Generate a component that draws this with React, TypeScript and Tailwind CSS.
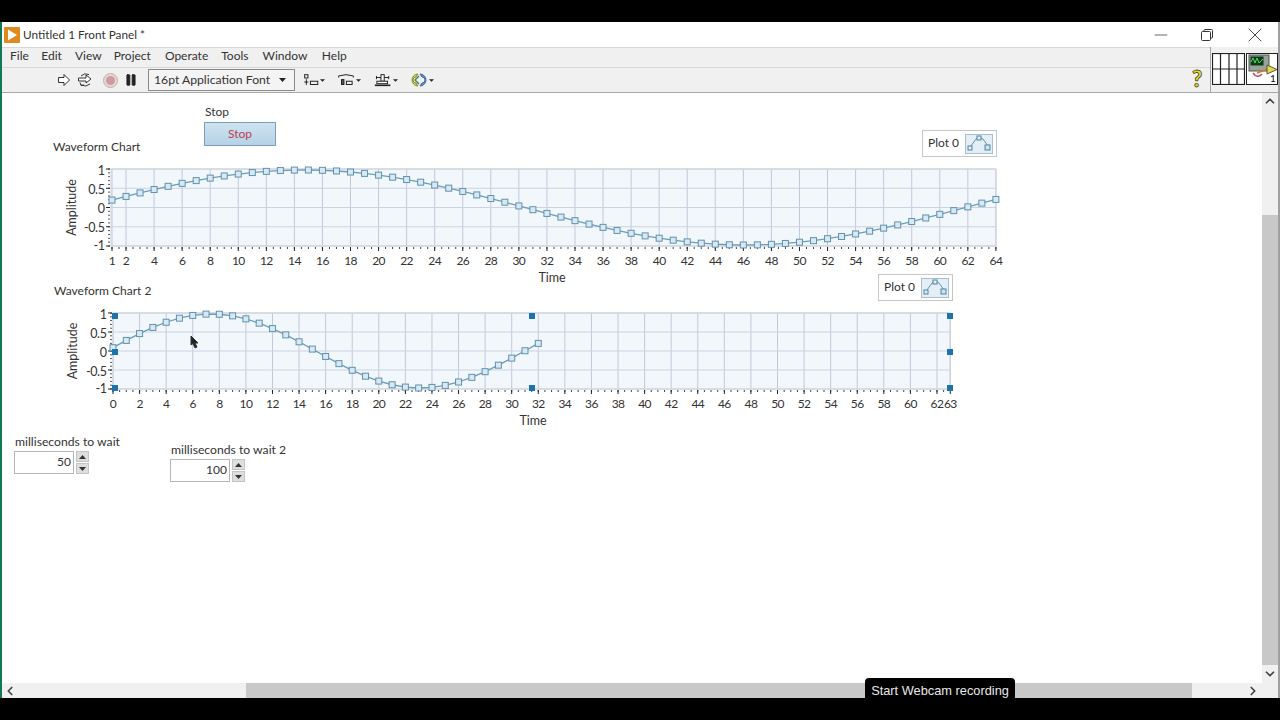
import { Minus, X, ChevronUp, ChevronDown, ChevronLeft, ChevronRight, Pause } from 'lucide-react';

const FONT = 'Lato, "Noto Sans", sans-serif';

type ChartProps = {
  className: string;
  viewBox: string;
  width: number;
  height: number;
  left: number;
  right: number;
  top: number;
  bottom: number;
  x0: number;
  pxPerUnit: number;
  labels: number[];
  points: number;
  freq: number;
  phase: number;
  firstIndex: number;
  timeX: number;
  timeY: number;
  ampX: number;
};

const Chart = (p: ChartProps) => {
  const toX = (v: number) => p.x0 + (v - p.firstIndex) * p.pxPerUnit;
  const mid = (p.top + p.bottom) / 2;
  const amp = (p.bottom - p.top) / 2 - 1;
  const data = Array.from({ length: p.points }, (_, i) => {
    const v = i + p.firstIndex;
    return { x: toX(v), y: mid - Math.sin(p.freq * (v + p.phase)) * amp };
  });
  const end = (p.right - p.x0) / p.pxPerUnit;
  const minor = Array.from({ length: Math.floor(end * 2) + 1 }, (_, i) => p.x0 + (i * p.pxPerUnit) / 2);
  const yTicks = Array.from({ length: 21 }, (_, i) => p.top + ((p.bottom - p.top) * i) / 20);
  const yLabels = ['1', '0.5', '0', '-0.5', '-1'];

  return (
    <svg className={p.className} width={p.width} height={p.height} viewBox={p.viewBox} style={{ fontFamily: FONT }}>
      <rect x={p.left} y={p.top} width={p.right - p.left} height={p.bottom - p.top} fill="#f2f7fb" />
      {p.labels.map((l) => (
        <line key={l} x1={toX(l)} x2={toX(l)} y1={p.top} y2={p.bottom} stroke="#c2c8dc" />
      ))}
      {[0, 1, 2, 3, 4].map((i) => {
        const y = p.top + ((p.bottom - p.top) * i) / 4;
        return <line key={i} x1={p.left} x2={p.right} y1={y} y2={y} stroke="#cdd2e2" />;
      })}
      <rect x={p.left} y={p.top} width={p.right - p.left} height={p.bottom - p.top} fill="none" stroke="#cfd2d8" />
      {minor.map((x, i) => (
        <line key={i} x1={x} x2={x} y1={p.bottom + 1} y2={p.bottom + 3} stroke="#444" strokeWidth="1" />
      ))}
      {p.labels.map((l) => (
        <line key={l} x1={toX(l)} x2={toX(l)} y1={p.bottom + 1} y2={p.bottom + 5} stroke="#222" strokeWidth="1" />
      ))}
      {yTicks.map((y, i) => (
        <line key={i} x1={p.left - 3} x2={p.left - 1} y1={y} y2={y} stroke="#555" />
      ))}
      {yLabels.map((l, i) => (
        <g key={l}>
          <line x1={p.left - 5} x2={p.left - 1} y1={p.top + ((p.bottom - p.top) * i) / 4} y2={p.top + ((p.bottom - p.top) * i) / 4} stroke="#222" />
          <text x={p.left - 6.5} y={p.top + ((p.bottom - p.top) * i) / 4 + 5.5 + (i === 0 ? 0.5 : i === 4 ? -1.5 : 0)} textAnchor="end" fontSize="12.5" letterSpacing="-0.4" fill="#333">
            {l}
          </text>
        </g>
      ))}
      {p.labels.map((l) => (
        <text key={l} x={toX(l)} y={p.bottom + 19} textAnchor="middle" fontSize="12" letterSpacing="-0.6" fill="#333">
          {l}
        </text>
      ))}
      <polyline points={data.map((d) => d.x + ',' + d.y).join(' ')} fill="none" stroke="#6b9db8" strokeWidth="1.3" />
      {data.map((d, i) => (
        <rect key={i} x={d.x - 3} y={d.y - 3} width="6" height="6" fill="#d9e8f2" stroke="#5f93ae" />
      ))}
      <text x={p.timeX} y={p.timeY} textAnchor="middle" fontSize="12.5" fill="#333">
        Time
      </text>
      <text transform={'translate(' + p.ampX + ',' + mid + ') rotate(-90)'} textAnchor="middle" fontSize="12.5" fill="#333">
        Amplitude
      </text>
    </svg>
  );
};

const PlotLegend = ({ className }: { className: string }) => (
  <div className={'absolute flex h-[27px] w-[75px] items-center justify-between border border-[#c6c6c6] bg-white pl-[5px] pr-[3px] ' + className}>
    <span className="pb-[2px] text-[12px] text-[#333]">Plot 0</span>
    <svg width="28" height="20" viewBox="0 0 28 20">
      <rect x="0.5" y="0.5" width="27" height="19" fill="#e4eef6" stroke="#a9bfd0" />
      <path d="M4 15 L6 12 L11 5 L14 3 L18 5 L23 12 L25 14" fill="none" stroke="#5f93ae" />
      <rect x="3" y="12" width="4" height="4" fill="#e4eef6" stroke="#4f84a0" />
      <rect x="12" y="2" width="4" height="4" fill="#e4eef6" stroke="#4f84a0" />
      <rect x="20" y="11" width="5" height="5" fill="#cfe3ef" stroke="#4f84a0" />
    </svg>
  </div>
);

const Numeric = ({ label, value, className }: { label: string; value: string; className: string }) => (
  <div className={'absolute flex w-[130px] flex-col ' + className}>
    <span className="h-[18px] pl-[1px] text-[12.2px] leading-[17px] text-[#333]">{label}</span>
    <div className="flex gap-[2px]">
      <div className="flex h-[23px] w-[60px] items-center justify-end border border-[#b5b5b5] bg-white pb-[2px] pr-[2px] text-[12px] text-[#333]">
        {value}
      </div>
      <div className="flex flex-col gap-[1px]">
        <div className="flex h-[11px] w-[13px] items-center justify-center border border-[#c4c4c4] bg-[#dedede]">
          <svg width="7" height="4" viewBox="0 0 7 4"><path d="M3.5 0 L7 4 H0 Z" fill="#333" /></svg>
        </div>
        <div className="flex h-[11px] w-[13px] items-center justify-center border border-[#c4c4c4] bg-[#dedede]">
          <svg width="7" height="4" viewBox="0 0 7 4"><path d="M0 0 H7 L3.5 4 Z" fill="#333" /></svg>
        </div>
      </div>
    </div>
  </div>
);

const Handle = ({ className }: { className: string }) => (
  <div className={'absolute h-[6px] w-[6px] bg-[#1a74ae] ' + className} />
);

const AlignIcon = ({ children, className }: { children: React.ReactNode; className: string }) => (
  <div className={'flex items-center gap-[1px] ' + className}>
    <svg width="18" height="14" viewBox="0 0 22 16" fill="none" stroke="#222" strokeWidth="1.2">
      {children}
    </svg>
    <svg width="5" height="3" viewBox="0 0 6 3"><path d="M0 0 H6 L3 3 Z" fill="#222" /></svg>
  </div>
);

const App = () => {
  const menus = [
    { name: 'File', cls: 'ml-[8px]' },
    { name: 'Edit', cls: 'ml-[12.5px]' },
    { name: 'View', cls: 'ml-[13px]' },
    { name: 'Project', cls: 'ml-[12px]' },
    { name: 'Operate', cls: 'ml-[14px]' },
    { name: 'Tools', cls: 'ml-[13px]' },
    { name: 'Window', cls: 'ml-[14px]' },
    { name: 'Help', cls: 'ml-[14.5px]' },
  ];
  const labels1 = [1, 2];
  for (let i = 4; i <= 64; i += 2) labels1.push(i);
  const labels2: number[] = [];
  for (let i = 0; i <= 62; i += 2) labels2.push(i);
  labels2.push(63);

  return (
    <div className="flex h-[720px] w-[1280px] flex-col overflow-hidden bg-black" style={{ fontFamily: FONT }}>
      <div className="h-[22px] shrink-0 bg-black" />
      <div className="relative flex h-[676px] flex-col border-l-2 border-r-2 border-l-[#0f7a55] border-r-[#a0a0a0] bg-white">
        {/* title bar */}
        <div className="flex h-[25px] shrink-0 items-center bg-white">
          <svg className="ml-[2px]" width="16" height="16" viewBox="0 0 16 16">
            <rect width="16" height="16" rx="1" fill="#e08a1e" />
            <path d="M4 2.5 L13 8 L4 13.5 Z" fill="#fff" />
          </svg>
          <span className="ml-[3px] pt-[1px] text-[11.8px] text-[#333]">Untitled 1 Front Panel *</span>
          <div className="ml-auto flex items-center gap-[29px] pr-[11px] text-[#333]">
            <Minus size={20} strokeWidth={0.9} />
            <svg width="14" height="14" viewBox="0 0 14 14" fill="none" stroke="#333">
              <rect x="1.5" y="3.5" width="9" height="9" rx="1" />
              <path d="M4 3.5 V2.5 A1 1 0 0 1 5 1.5 H11.5 A1 1 0 0 1 12.5 2.5 V9 A1 1 0 0 1 11.5 10 H10.5" />
            </svg>
            <X size={24} strokeWidth={0.9} />
          </div>
        </div>
        {/* menu + toolbar with connector pane */}
        <div className="flex h-[46px] shrink-0 border-b border-[#a8a8a8] bg-[#f0f0f0]">
          <div className="flex flex-1 flex-col">
            <div className="flex h-[21px] items-center border-b border-t border-[#d8d8d8] pb-[3px] text-[12px] text-[#333]">
              {menus.map((m) => (
                <span key={m.name} className={m.cls}>{m.name}</span>
              ))}
            </div>
            <div className="flex flex-1 items-center">
              <svg className="ml-[55px]" width="14" height="14" viewBox="0 0 14 14" fill="#fff" stroke="#333">
                <path d="M1.5 4.5 H7 V1.5 L12.5 7 L7 12.5 V9.5 H1.5 Z" />
              </svg>
              <svg className="ml-[6px]" width="17" height="16" viewBox="0 0 17 16" fill="#fff" stroke="#333">
                <path d="M1.5 6 H9 V3 L14 7 L9 11 V9 H1.5 Z" />
                <path d="M4 4 Q7 0.5 12 2.5 M13 12 Q9 15.5 4 13 M3 10.5 L4 13.5 L7 13" fill="none" />
              </svg>
              <div className="ml-[9px] flex h-[15px] w-[15px] items-center justify-center rounded-full border border-[#bfb0b0] bg-[#e9d6d6]">
                <div className="h-[9px] w-[9px] rounded-full bg-[#cf9a9e]" />
              </div>
              <Pause className="ml-[6px]" size={14} fill="#222" stroke="#222" strokeWidth={1.5} />
              <div className="ml-[10px] flex h-[22px] w-[147px] items-center justify-between border border-[#8a8a8a] bg-[#f4f4f4] px-[5px] pr-[8px] text-[12.2px] text-[#333]">
                <span>16pt Application Font</span>
                <svg width="7" height="4" viewBox="0 0 7 4"><path d="M0 0 H7 L3.5 4 Z" fill="#222" /></svg>
              </div>
              <AlignIcon className="ml-[6px]">
                <rect x="4.5" y="1.5" width="4" height="4" />
                <path d="M6.5 7 V14 M4 10.5 H9" />
                <rect x="11.5" y="9.5" width="9" height="4" />
              </AlignIcon>
              <AlignIcon className="ml-[12px]">
                <path d="M2 3 Q11 0 20 3 M2 5 V3 M20 5 V3" />
                <rect x="5.5" y="7.5" width="3" height="6" fill="#555" />
                <rect x="11.5" y="9.5" width="7" height="4" />
              </AlignIcon>
              <AlignIcon className="ml-[13px]">
                <path d="M1 14.5 H20" strokeWidth="2" />
                <path d="M3 5 H18 M3 3 V7 M18 3 V7" />
                <rect x="8.5" y="1.5" width="4" height="8" fill="#fff" />
                <rect x="3.5" y="9.5" width="13" height="3" fill="#fff" />
              </AlignIcon>
              <div className="ml-[12px] flex items-center gap-[1px]">
                <svg width="18" height="16" viewBox="0 0 18 16">
                  <path d="M8 2 A6 6 0 0 0 8 14 L6 11 A3 3 0 0 1 6 5 Z" fill="#d9cf3a" stroke="#8f8a30" />
                  <path d="M10 2 A6 6 0 0 1 10 14 L12 11 A3 3 0 0 0 12 5 Z" fill="#5f97cf" stroke="#3d6a9c" />
                  <path d="M9 4 L5 8 L9 12" fill="none" stroke="#2f8d5a" strokeWidth="1.4" />
                </svg>
                <svg width="5" height="3" viewBox="0 0 6 3"><path d="M0 0 H6 L3 3 Z" fill="#222" /></svg>
              </div>
              <svg className="-my-[2px] ml-auto mr-[4px]" width="18" height="28" viewBox="0 0 18 28">
                <text x="9" y="21" textAnchor="middle" fontSize="22" fontWeight="900" fill="#e3d93a" stroke="#4d4a18" strokeWidth="0.8">?</text>
              </svg>
            </div>
          </div>
          <div className="flex w-[68px] shrink-0 items-center gap-[1px] border-l border-[#a8a8a8] pb-[2px] pl-[1px]">
            <svg width="33" height="32" viewBox="0 0 33 32" fill="#fff" stroke="#222" strokeWidth="1.2">
              <rect x="0.5" y="0.5" width="32" height="31" />
              <path d="M0.5 16 H32.5 M8.5 0.5 V31.5 M17 0.5 V31.5 M25 0.5 V31.5" />
            </svg>
            <svg width="32" height="32" viewBox="0 0 32 32">
              <rect x="0.5" y="0.5" width="31" height="31" fill="#fff" stroke="#222" />
              <rect x="3" y="2" width="20" height="16" fill="#9aa39a" stroke="#555" />
              <rect x="4.5" y="3.5" width="13" height="9" fill="#0d3b1e" />
              <path d="M5 9 L7 5 L9 10 L11 5 L13 10 L17 6" fill="none" stroke="#57d957" />
              <path d="M7 20 Q11 26 16 21" fill="none" stroke="#c44a7a" strokeWidth="1.6" />
              <path d="M11 20 L22 16" stroke="#d47a20" strokeWidth="1.6" />
              <path d="M21 12 L31 16.5 L21 21 Z" fill="#e3dc3a" stroke="#555" />
              <text x="27" y="29" textAnchor="middle" fontSize="10" fill="#111">1</text>
            </svg>
          </div>
        </div>
        {/* panel + vertical scrollbar */}
        <div className="flex min-h-0 flex-1">
          <div className="relative flex-1 bg-white text-[#333]">
            <span className="absolute left-[203px] top-[10px] text-[12px] leading-[17px]">Stop</span>
            <div className="absolute left-[202px] top-[29px] flex h-[24px] w-[72px] items-center justify-center border border-[#7d9db6] bg-gradient-to-b from-[#cfe3f1] to-[#b5d2e6] pb-[1px] text-[12px] text-[#b8404f]">
              Stop
            </div>
            <span className="absolute left-[51px] top-[45px] text-[12px] leading-[17px]">Waveform Chart</span>
            <PlotLegend className="left-[920px] top-[37px]" />
            <Chart
              className="absolute left-[48px] top-[67px]"
              viewBox="50 160 960 130"
              width={960}
              height={130}
              left={111}
              right={996}
              top={169}
              bottom={246}
              x0={112}
              pxPerUnit={14.03}
              labels={labels1}
              points={64}
              freq={0.1}
              phase={1}
              firstIndex={1}
              timeX={552}
              timeY={282}
              ampX={76}
            />
            <span className="absolute left-[52px] top-[189px] text-[12px] leading-[17px]">Waveform Chart 2</span>
            <PlotLegend className="left-[876px] top-[181px]" />
            <Chart
              className="absolute left-[48px] top-[211px]"
              viewBox="50 304 960 130"
              width={960}
              height={130}
              left={113}
              right={950}
              top={313}
              bottom={389}
              x0={113}
              pxPerUnit={13.29}
              labels={labels2}
              points={33}
              freq={0.2}
              phase={0.45}
              firstIndex={0}
              timeX={533}
              timeY={425}
              ampX={77}
            />
            <Handle className="left-[110px] top-[220px]" />
            <Handle className="left-[110px] top-[256px]" />
            <Handle className="left-[110px] top-[292px]" />
            <Handle className="left-[527px] top-[220px]" />
            <Handle className="left-[527px] top-[292px]" />
            <Handle className="left-[945px] top-[220px]" />
            <Handle className="left-[945px] top-[256px]" />
            <Handle className="left-[945px] top-[292px]" />
            <svg className="absolute left-[188px] top-[242px]" width="9" height="14" viewBox="0 0 9 14">
              <path d="M1 1 V10 L3 8.5 L5 13 L7 12 L5 8 H8 Z" fill="#222" stroke="#333" />
            </svg>
            <Numeric label="milliseconds to wait" value="50" className="left-[12px] top-[340px]" />
            <Numeric label="milliseconds to wait 2" value="100" className="left-[168px] top-[348px]" />
          </div>
          <div className="flex w-[16px] shrink-0 flex-col bg-[#f0f0f0] text-[#444]">
            <div className="flex h-[122px] shrink-0 justify-center pt-[1px]">
              <ChevronUp size={14} strokeWidth={3} />
            </div>
            <div className="h-[450px] shrink-0 bg-[#c8c8c8]" />
            <div className="flex flex-1 items-center justify-center">
              <ChevronDown size={14} strokeWidth={3} />
            </div>
          </div>
        </div>
        {/* horizontal scrollbar */}
        <div className="flex h-[15px] shrink-0 items-center bg-[#f0f0f0] text-[#444]">
          <div className="flex w-[244px] shrink-0 pl-[1px]">
            <ChevronLeft size={14} strokeWidth={3} />
          </div>
          <div className="h-full w-[946px] shrink-0 bg-[#c8c8c8]" />
          <div className="ml-[54px]">
            <ChevronRight size={14} strokeWidth={3} />
          </div>
        </div>
        {/* recorder tooltip */}
        <div
          className="absolute bottom-0 left-[863px] flex h-[20px] w-[150px] items-center justify-center rounded-t-[4px] bg-black pt-[5px] text-[12.8px] text-[#e8e8e8]"
          style={{ fontFamily: '"Liberation Sans", sans-serif' }}
        >
          Start Webcam recording
        </div>
      </div>
      <div className="h-[22px] shrink-0 bg-black" />
    </div>
  );
};

export default App;
